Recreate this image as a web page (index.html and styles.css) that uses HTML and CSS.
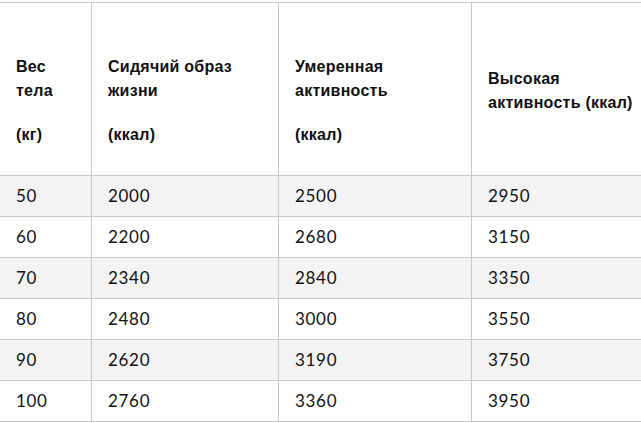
FILE: index.html
```
<!DOCTYPE html>
<html lang="ru">
<head>
<meta charset="utf-8">
<link rel="stylesheet" href="styles.css">
</head>
<body>
<div class="wrap">
<table class="kcal">
  <colgroup>
    <col class="c1"><col class="c2"><col class="c3"><col class="c4">
  </colgroup>
  <thead>
    <tr>
      <th><p>Вес тела</p><p class="unit">(кг)</p></th>
      <th><p>Сидячий образ жизни</p><p class="unit">(ккал)</p></th>
      <th><p>Умеренная активность</p><p class="unit">(ккал)</p></th>
      <th class="single"><p>Высокая активность (ккал)</p></th>
    </tr>
  </thead>
  <tbody>
    <tr class="alt"><td>50</td><td>2000</td><td>2500</td><td>2950</td></tr>
    <tr><td>60</td><td>2200</td><td>2680</td><td>3150</td></tr>
    <tr class="alt"><td>70</td><td>2340</td><td>2840</td><td>3350</td></tr>
    <tr><td>80</td><td>2480</td><td>3000</td><td>3550</td></tr>
    <tr class="alt"><td>90</td><td>2620</td><td>3190</td><td>3750</td></tr>
    <tr><td>100</td><td>2760</td><td>3360</td><td>3950</td></tr>
  </tbody>
</table>
</div>
</body>
</html>
```
FILE: styles.css
```
html, body {
  margin: 0;
  padding: 0;
  background: #ffffff;
  overflow: hidden;
}
.wrap {
  padding-top: 2px;
  margin-left: -1px;
}
.kcal {
  border-collapse: collapse;
  table-layout: fixed;
  width: 652px;
  color: #111111;
}
.c1 { width: 92px; }
.c2 { width: 187px; }
.c3 { width: 193px; }
.c4 { width: 180px; }
.kcal th, .kcal td {
  border: 1px solid #c8c8c8;
  text-align: left;
}
.kcal th {
  font-family: "Liberation Sans", Arial, sans-serif;
  font-weight: 700;
  font-size: 16px;
  letter-spacing: 0.25px;
  line-height: 24px;
  vertical-align: top;
  padding: 52px 16px 28px 16px;
}
.kcal th p {
  margin: 0;
}
.kcal th p.unit {
  margin-top: 20px;
}
.kcal th.single {
  padding-top: 64px;
}
.kcal td {
  font-family: Lato, "Liberation Sans", sans-serif;
  font-size: 17px;
  letter-spacing: 0.7px;
  line-height: 24px;
  height: 24px;
  padding: 8px 16px;
  vertical-align: middle;
}
.kcal tr.alt td {
  background: #f3f3f3;
}
```
